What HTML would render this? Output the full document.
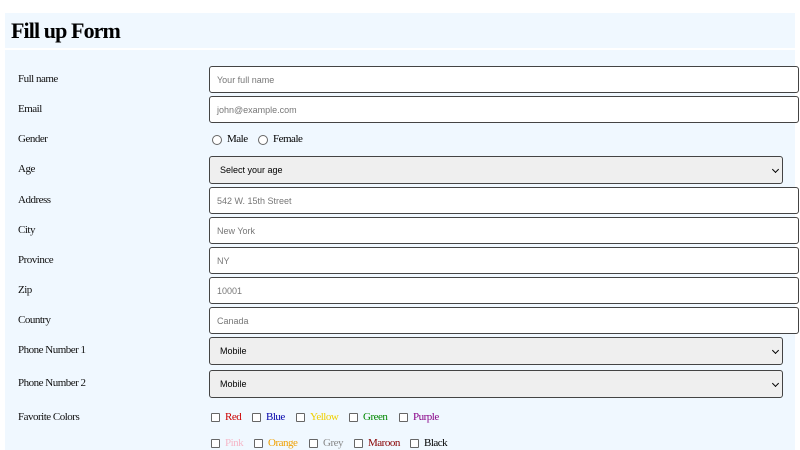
<!DOCTYPE html>
<html><head><style>
body{margin:0;width:800px;height:450px;overflow:hidden;background:#fff;font-family:"Liberation Serif",serif;position:relative}
.hd{position:absolute;left:5px;top:13px;width:790px;height:35px;background:#f0f8ff}
.hd h1{margin:0;position:absolute;left:6px;top:6px;font-size:22px;letter-spacing:-0.9px;font-weight:bold;line-height:24px}
.bd{position:absolute;left:5px;top:50px;width:790px;height:400px;background:#f0f8ff}
.l{position:absolute;left:18px;font-size:11px;letter-spacing:-0.5px;color:#111;line-height:13px}
.i{position:absolute;left:209px;border:1px solid #444;border-radius:3px;background:#fff;box-sizing:border-box;width:590px;height:27px;font-family:"Liberation Sans",sans-serif;font-size:9px;color:#777;padding:8px 0 0 7px}
.s{position:absolute;left:209px;width:574px;height:28px;border:1px solid #444;border-radius:3px;background:#efefef;box-sizing:border-box;font-family:"Liberation Sans",sans-serif;font-size:9px;color:#000;padding:8px 0 0 10px}
.s:after{content:"";position:absolute;right:4px;top:10px;width:4px;height:4px;border-right:1.5px solid #000;border-bottom:1.5px solid #000;transform:rotate(45deg)}
.o{position:absolute;font-size:11px;letter-spacing:-0.5px;display:flex;align-items:center;line-height:13px}
.cb{display:inline-block;width:7px;height:7px;border:1px solid #666;border-radius:1px;margin-right:5px;background:#fff}
.rd{display:inline-block;width:8px;height:8px;border:1px solid #666;border-radius:50%;margin-right:5px;background:#fff}
</style></head><body>
<div class="hd"><h1>Fill up Form</h1></div>
<div class="bd"></div>
<div class="l" style="top:73px">Full name</div><div class="i" style="top:66px">Your full name</div>
<div class="l" style="top:103px">Email</div><div class="i" style="top:96px">john@example.com</div>
<div class="l" style="top:133px">Gender</div>
<div class="o" style="left:212px;top:133px"><span class="rd"></span>Male</div>
<div class="o" style="left:258px;top:133px"><span class="rd"></span>Female</div>
<div class="l" style="top:163px">Age</div><div class="s" style="top:156px">Select your age</div>
<div class="l" style="top:194px">Address</div><div class="i" style="top:187px">542 W. 15th Street</div>
<div class="l" style="top:224px">City</div><div class="i" style="top:217px">New York</div>
<div class="l" style="top:254px">Province</div><div class="i" style="top:247px">NY</div>
<div class="l" style="top:284px">Zip</div><div class="i" style="top:277px">10001</div>
<div class="l" style="top:314px">Country</div><div class="i" style="top:307px">Canada</div>
<div class="l" style="top:344px">Phone Number 1</div><div class="s" style="top:337px">Mobile</div>
<div class="l" style="top:377px">Phone Number 2</div><div class="s" style="top:370px">Mobile</div>
<div class="l" style="top:411px">Favorite Colors</div>
<div class="o" style="left:211px;top:411px;color:#c00"><span class="cb"></span>Red</div>
<div class="o" style="left:252px;top:411px;color:#00a"><span class="cb"></span>Blue</div>
<div class="o" style="left:296px;top:411px;color:#f0d000"><span class="cb"></span>Yellow</div>
<div class="o" style="left:349px;top:411px;color:#080"><span class="cb"></span>Green</div>
<div class="o" style="left:399px;top:411px;color:#808"><span class="cb"></span>Purple</div>
<div class="o" style="left:211px;top:437px;color:#f5b8c8"><span class="cb"></span>Pink</div>
<div class="o" style="left:254px;top:437px;color:#f0a000"><span class="cb"></span>Orange</div>
<div class="o" style="left:309px;top:437px;color:#888"><span class="cb"></span>Grey</div>
<div class="o" style="left:354px;top:437px;color:#800"><span class="cb"></span>Maroon</div>
<div class="o" style="left:410px;top:437px;color:#000"><span class="cb"></span>Black</div>
</body></html>
